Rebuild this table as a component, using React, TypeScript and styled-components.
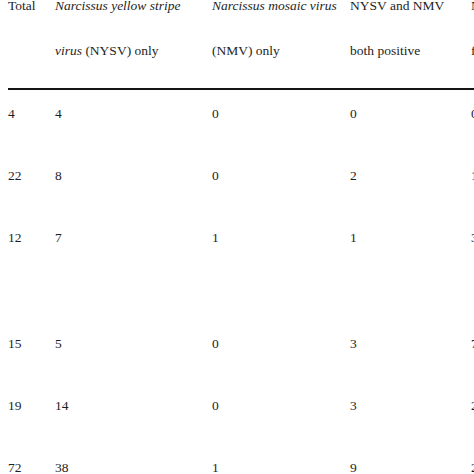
import styled, { createGlobalStyle } from 'styled-components';

const GlobalStyle = createGlobalStyle`
	html, body {
		margin: 0;
		padding: 0;
		background: #ffffff;
		overflow: hidden;
	}
	body {
		width: 474px;
		height: 474px;
	}
`;

const Page = styled.div`
	width: 474px;
	height: 474px;
	overflow: hidden;
	padding-left: 8px;
	box-sizing: border-box;
`;

const Table = styled.table`
	margin-top: -17px;
	border-collapse: collapse;
	table-layout: fixed;
	width: 600px;
	min-width: 600px;
	font-family: 'Liberation Serif', 'Times New Roman', serif;
	font-size: 13.5px;
	color: #1e1e1e;
`;

const Col = styled.col<{ $w: number }>`
	width: ${({ $w }) => $w}px;
`;

const HeadCell = styled.th`
	padding: 0 0 15px 0;
	text-align: left;
	vertical-align: top;
	font-weight: normal;
	line-height: 45px;
	white-space: nowrap;
	overflow: visible;
	border-bottom: 2px solid #141414;
`;

const Cell = styled.td<{ $tall?: boolean }>`
	padding: 1px 0 16px 0;
	text-align: left;
	vertical-align: top;
	line-height: 45px;
	height: ${({ $tall }) => ($tall ? 89 : 45)}px;
	white-space: nowrap;
`;

const Line = styled.div``;

const columns = [47, 157, 138, 121, 137];

const rows = [
	{ values: ['4', '4', '0', '0', '0'] },
	{ values: ['22', '8', '0', '2', '12'] },
	{ values: ['12', '7', '1', '1', '3'], tall: true },
	{ values: ['15', '5', '0', '3', '7'] },
	{ values: ['19', '14', '0', '3', '2'] },
	{ values: ['72', '38', '1', '9', '24'] },
];

export default function App() {
	return (
		<Page>
			<GlobalStyle />
			<Table>
				<colgroup>
					{columns.map((w, i) => (
						<Col key={i} $w={w} />
					))}
				</colgroup>
				<thead>
					<tr>
						<HeadCell>
							<Line>Total</Line>
						</HeadCell>
						<HeadCell>
							<Line>
								<i>Narcissus yellow stripe</i>
							</Line>
							<Line>
								<i>virus</i> (NYSV) only
							</Line>
						</HeadCell>
						<HeadCell>
							<Line>
								<i>Narcissus mosaic virus</i>
							</Line>
							<Line>(NMV) only</Line>
						</HeadCell>
						<HeadCell>
							<Line>NYSV and NMV</Line>
							<Line>both positive</Line>
						</HeadCell>
						<HeadCell>
							<Line>Negative</Line>
							<Line>for both</Line>
						</HeadCell>
					</tr>
				</thead>
				<tbody>
					{rows.map((row, i) => (
						<tr key={i}>
							{row.values.map((v, j) => (
								<Cell key={j} $tall={row.tall}>
									{v}
								</Cell>
							))}
						</tr>
					))}
				</tbody>
			</Table>
		</Page>
	);
}
